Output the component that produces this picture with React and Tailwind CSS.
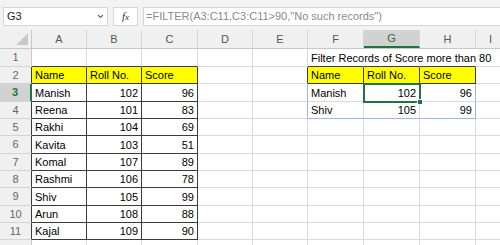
import React from "react";

const colW = [32, 55, 55, 56, 55, 55, 56, 56, 56];
const letters = ["A", "B", "C", "D", "E", "F", "G", "H", "I"];
const rowH = [18, 17, 18, 17, 17, 18, 17, 17, 18, 17, 17, 10];

const tableRows = [
  ["Manish", 102, 96],
  ["Reena", 101, 83],
  ["Rakhi", 104, 69],
  ["Kavita", 103, 51],
  ["Komal", 107, 89],
  ["Rashmi", 106, 78],
  ["Shiv", 105, 99],
  ["Arun", 108, 88],
  ["Kajal", 109, 90],
];
const spill = [
  ["Manish", 102, 96],
  ["Shiv", 105, 99],
];

const R = {
  dark: "border-r-[#3c3c3c]",
  blue: "border-r-[#9db5e0]",
  gray: "border-r-[#dadada]",
  none: "border-r-transparent",
  green: "border-r-[#217346]",
  hdr: "border-r-[#c8c8c8]",
};
const B = {
  dark: "border-b-[#3c3c3c]",
  blue: "border-b-[#9db5e0]",
  gray: "border-b-[#dadada]",
  hdr: "border-b-[#d4d4d4]",
};

const inTable = (r, c) => r >= 2 && r <= 11 && c >= 1 && c <= 3;
const inHdr2 = (r, c) => r === 2 && c >= 6 && c <= 8;
const inSpill = (r, c) => r >= 3 && r <= 4 && c >= 6 && c <= 8;

function cellContent(r, c) {
  if (r === 1 && c === 6) return { t: "Filter Records of Score more than 80", overflow: true };
  if (r === 2 && (c >= 1 && c <= 3)) return { t: ["Name", "Roll No.", "Score"][c - 1], yellow: true };
  if (r === 2 && (c >= 6 && c <= 8)) return { t: ["Name", "Roll No.", "Score"][c - 6], yellow: true };
  if (r >= 3 && r <= 11 && c >= 1 && c <= 3) {
    const v = tableRows[r - 3][c - 1];
    return { t: String(v), num: c > 1 };
  }
  if (r >= 3 && r <= 4 && c >= 6 && c <= 8) {
    const v = spill[r - 3][c - 6];
    return { t: String(v), num: c > 6 };
  }
  return null;
}

function rightKey(r, c) {
  if (r === 1 && c >= 6 && c <= 8) return "none";
  if (inTable(r, c) || inTable(r, c + 1) || inHdr2(r, c) || inHdr2(r, c + 1)) return "dark";
  if ((inSpill(r, c) && c === 8) || (inSpill(r, c + 1) && c === 5)) return "blue";
  return "gray";
}
function bottomKey(r, c) {
  if (inTable(r, c) || inTable(r + 1, c) || inHdr2(r, c) || inHdr2(r + 1, c)) return "dark";
  if (inSpill(r, c) && r === 4) return "blue";
  return "gray";
}

export default function App() {
  const font = { fontFamily: '"Liberation Sans", Arial, sans-serif' };
  return (
    <div className="relative w-[500px] h-[245px] overflow-hidden bg-white text-[11px] text-black" style={font}>
      {/* formula bar */}
      <div className="h-[30px] bg-[#f3f3f3] flex items-start pt-[7px] pl-[3px] gap-[5px]">
        <div className="w-[105px] h-[19px] bg-white border border-[#d6d6d6] flex items-center justify-between pl-[3px] pr-[3px]">
          <span className="text-[11px] text-[#222]">G3</span>
          <svg width="7" height="5" viewBox="0 0 7 5">
            <path d="M1 1 L3.5 3.5 L6 1" fill="none" stroke="#666" strokeWidth="1.1" />
          </svg>
        </div>
        <div className="w-[25px] h-[19px] bg-white border border-[#d6d6d6] flex items-center justify-center">
          <span className="italic text-[11px] text-[#333]" style={{ fontFamily: '"Liberation Serif", serif' }}>
            f<span className="text-[9px]">x</span>
          </span>
        </div>
        <div className="flex-1 h-[19px] bg-white border border-[#d6d6d6] border-r-0 flex items-center pl-[2px]">
          <span className="text-[#8a8a8a] whitespace-nowrap">=FILTER(A3:C11,C3:C11&gt;90,"No such records")</span>
        </div>
      </div>

      {/* column headers */}
      <div className="flex h-[19px] bg-[#f0f0f0] border-b border-[#c8c8c8]">
        <div className="w-[32px] shrink-0 border-r border-[#c8c8c8] relative">
          <svg className="absolute right-[3px] bottom-[3px]" width="12" height="12" viewBox="0 0 12 12">
            <path d="M12 0 L12 12 L0 12 Z" fill="#c9c9c9" />
          </svg>
        </div>
        {letters.map((l, i) => {
          const sel = l === "G";
          return (
            <div
              key={l}
              className={
                "shrink-0 flex items-center justify-center border-r border-[#d6d6d6] " +
                (sel ? "bg-[#d2d2d2] text-[#217346] border-b-2 border-b-[#217346]" : "text-[#555]")
              }
              style={{ width: i < 8 ? colW[i + 1] : 30 }}
            >
              {l}
            </div>
          );
        })}
      </div>

      {/* rows */}
      {rowH.map((h, idx) => {
        const r = idx + 1;
        const selRow = r === 3;
        return (
          <div key={r} className="flex" style={{ height: h }}>
            <div
              className={
                "w-[32px] shrink-0 flex items-center justify-center border-b border-r " +
                B.hdr +
                " " +
                (selRow ? "bg-[#d2d2d2] text-[#217346] font-bold border-r-2 border-r-[#217346]" : "bg-[#f0f0f0] text-[#666] " + (inTable(r, 1) ? R.dark : R.hdr))
              }
            >
              {r <= 11 ? r : ""}
            </div>
            {letters.map((l, i) => {
              const c = i + 1;
              const content = r <= 11 ? cellContent(r, c) : null;
              const rk = rightKey(r, c);
              const bk = bottomKey(r, c);
              const w = i < 8 ? colW[i + 1] : 30;
              return (
                <div
                  key={l}
                  className={
                    "shrink-0 relative flex items-end pb-[1px] border-r border-b " +
                    R[rk] +
                    " " +
                    B[bk] +
                    " " +
                    (content && content.yellow ? "bg-[#ffff00] " : "") +
                    (content && content.num ? "justify-end pr-[3px]" : "pl-[3px]")
                  }
                  style={{ width: w }}
                >
                  {content && (
                    <span className={"whitespace-nowrap leading-[13px] " + (content.overflow ? "relative z-10" : "")}>
                      {content.t}
                    </span>
                  )}
                </div>
              );
            })}
          </div>
        );
      })}

      {/* selection G3 */}
      <div className="absolute left-[363px] top-[83px] w-[58px] h-[20px] border-2 border-[#217346] pointer-events-none" />
      <div className="absolute left-[417px] top-[99px] w-[6px] h-[6px] bg-[#217346] border border-white" />
    </div>
  );
}
